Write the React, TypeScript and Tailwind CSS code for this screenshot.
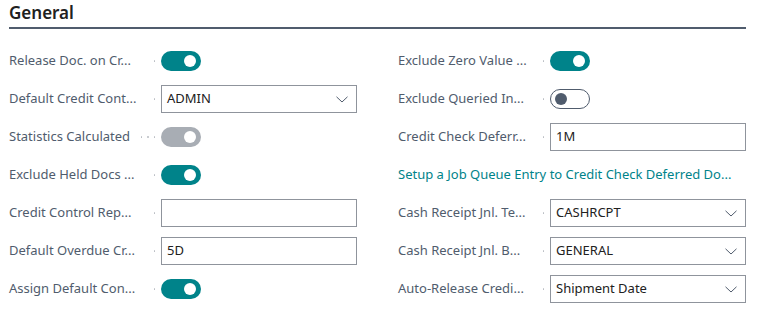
type Field =
  | { kind: 'toggle'; label: string; dots?: number; state: 'on' | 'off' | 'disabled' }
  | { kind: 'input'; label: string; dots?: number; value: string }
  | { kind: 'select'; label: string; dots?: number; value: string }
  | { kind: 'link'; text: string };

const left: Field[] = [
  { kind: 'toggle', label: 'Release Doc. on Cr...', state: 'on' },
  { kind: 'select', label: 'Default Credit Cont...', value: 'ADMIN' },
  { kind: 'toggle', label: 'Statistics Calculated', dots: 3, state: 'disabled' },
  { kind: 'toggle', label: 'Exclude Held Docs ...', state: 'on' },
  { kind: 'input', label: 'Credit Control Rep...', value: '' },
  { kind: 'input', label: 'Default Overdue Cr...', value: '5D' },
  { kind: 'toggle', label: 'Assign Default Con...', state: 'on' },
];

const right: Field[] = [
  { kind: 'toggle', label: 'Exclude Zero Value ...', state: 'on' },
  { kind: 'toggle', label: 'Exclude Queried In...', state: 'off' },
  { kind: 'input', label: 'Credit Check Deferr...', value: '1M' },
  { kind: 'link', text: 'Setup a Job Queue Entry to Credit Check Deferred Do...' },
  { kind: 'select', label: 'Cash Receipt Jnl. Te...', value: 'CASHRCPT' },
  { kind: 'select', label: 'Cash Receipt Jnl. B...', value: 'GENERAL' },
  { kind: 'select', label: 'Auto-Release Credi...', value: 'Shipment Date' },
];

function Toggle({ state }: { state: 'on' | 'off' | 'disabled' }) {
  if (state === 'off') {
    return (
      <div className="w-[40px] h-[20px] rounded-full border border-[#505c6d] flex items-center pl-[4px]">
        <div className="w-[12px] h-[12px] rounded-full bg-[#505c6d]" />
      </div>
    );
  }
  return (
    <div
      className={
        'w-[40px] h-[20px] rounded-full flex items-center justify-end pr-[5px] ' +
        (state === 'on' ? 'bg-[#00838a]' : 'bg-[#a8adb4]')
      }
    >
      <div className="w-[12px] h-[12px] rounded-full bg-white" />
    </div>
  );
}

function Chevron() {
  return (
    <svg width="12" height="7" viewBox="0 0 12 7" fill="none" className="shrink-0">
      <polyline points="0.5,0.8 6,6 11.5,0.8" stroke="#505c6d" strokeWidth="1" />
    </svg>
  );
}

function Row({ field }: { field: Field }) {
  if (field.kind === 'link') {
    return (
      <div className="h-[38px] flex items-center">
        <span className="text-[#00838a] whitespace-nowrap">{field.text}</span>
      </div>
    );
  }
  const dots = field.dots ?? 1;
  return (
    <div className="h-[38px] flex items-center">
      <div className="w-[152px] shrink-0 flex items-center">
        <span className="text-[#505c6d] whitespace-nowrap">{field.label}</span>
        <span className="flex-1" />
        <span className="flex gap-[5px] mr-[6px]">
          {Array.from({ length: dots }).map((_, i) => (
            <span key={i} className="w-[1.5px] h-[1.5px] rounded-full bg-[#b8bcc2]" />
          ))}
        </span>
      </div>
      {field.kind === 'toggle' && <Toggle state={field.state} />}
      {field.kind === 'input' && (
        <div className="flex-1 h-[28px] border border-[#8f949c] flex items-center pl-[5px] text-[#212121]">
          {field.value}
        </div>
      )}
      {field.kind === 'select' && (
        <div className="flex-1 h-[28px] border border-[#8f949c] flex items-center pl-[5px] pr-[8px] text-[#212121]">
          <span className="flex-1">{field.value}</span>
          <Chevron />
        </div>
      )}
    </div>
  );
}

export default function App() {
  return (
    <div
      className="w-[762px] h-[317px] bg-white px-[9px] text-[13px]"
      style={{ fontFamily: '"Segoe UI", "Noto Sans", sans-serif' }}
    >
      {/* Header */}
      <div className="w-[737px] border-b-2 border-[#505c6d] h-[29px] pt-[2px]">
        <h2 className="text-[17px] font-semibold text-[#212121] leading-[22px]">General</h2>
      </div>

      {/* Fields */}
      <div className="grid grid-cols-[348px_348px] gap-x-[41px] pt-[13px]">
        <div className="flex flex-col">
          {left.map((f, i) => (
            <Row key={i} field={f} />
          ))}
        </div>
        <div className="flex flex-col">
          {right.map((f, i) => (
            <Row key={i} field={f} />
          ))}
        </div>
      </div>
    </div>
  );
}
